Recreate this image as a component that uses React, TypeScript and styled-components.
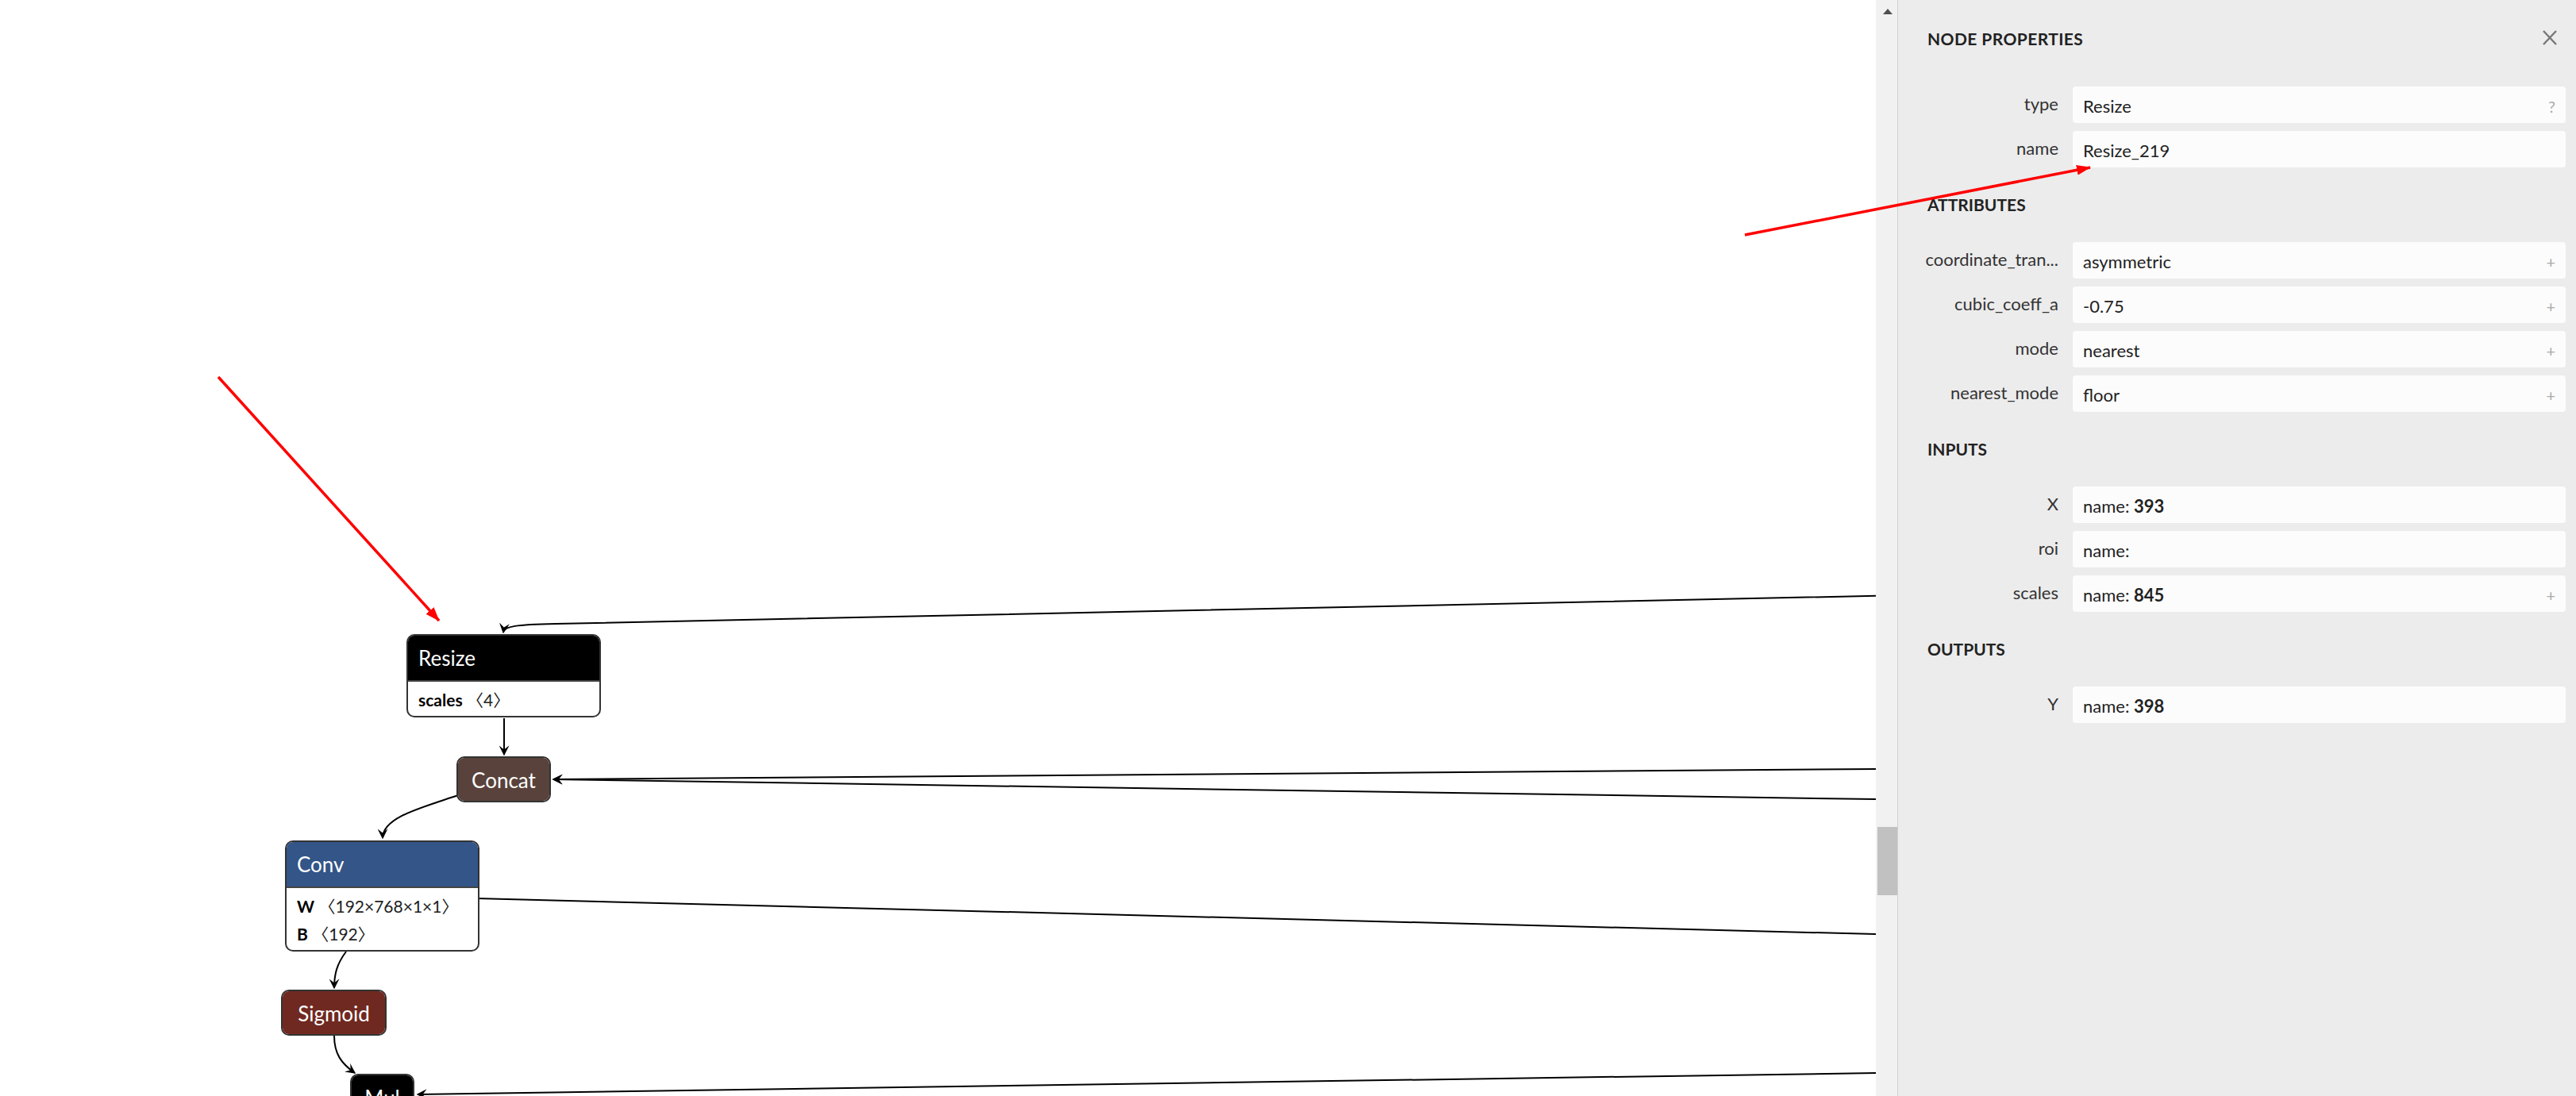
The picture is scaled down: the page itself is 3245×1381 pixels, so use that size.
import React from 'react';
import styled, { createGlobalStyle } from 'styled-components';

interface IAttr {
  name: string;
  value: string;
}

interface IGraphNode {
  title: string;
  color: string;
  x: number;
  y: number;
  w: number;
  attrs?: IAttr[];
}

interface IProp {
  label: string;
  value?: string;
  ref?: string;
  marker?: '+' | '?';
}

const nodes: IGraphNode[] = [
  { title: 'Resize', color: '#000', x: 512, y: 799, w: 245, attrs: [{ name: 'scales', value: '〈4〉' }] },
  { title: 'Concat', color: 'rgb(89, 66, 59)', x: 575, y: 953, w: 119 },
  {
    title: 'Conv',
    color: 'rgb(51, 85, 136)',
    x: 359,
    y: 1059,
    w: 245,
    attrs: [
      { name: 'W', value: '〈192×768×1×1〉' },
      { name: 'B', value: '〈192〉' },
    ],
  },
  { title: 'Sigmoid', color: 'rgb(112, 41, 33)', x: 354, y: 1247, w: 133 },
  { title: 'Mul', color: '#000', x: 441, y: 1353, w: 81 },
];

const edges = [
  'M 2400 750 L 700 786 C 650 787, 635 789, 634 797',
  'M 635 905 L 635 951',
  'M 2400 968.7 L 697 982',
  'M 2400 1007.6 L 697 982',
  'M 577 1002 C 530 1018, 482 1030, 482 1056',
  'M 600 1132 L 2400 1178',
  'M 436 1199 C 424 1215, 421 1228, 421 1245',
  'M 421 1305 C 421 1328, 430 1340, 447 1352',
  'M 2400 1351.5 L 526 1379',
];

const general: IProp[] = [
  { label: 'type', value: 'Resize', marker: '?' },
  { label: 'name', value: 'Resize_219' },
];

const sections: { title: string; rows: IProp[] }[] = [
  {
    title: 'ATTRIBUTES',
    rows: [
      { label: 'coordinate_tran...', value: 'asymmetric', marker: '+' },
      { label: 'cubic_coeff_a', value: '-0.75', marker: '+' },
      { label: 'mode', value: 'nearest', marker: '+' },
      { label: 'nearest_mode', value: 'floor', marker: '+' },
    ],
  },
  {
    title: 'INPUTS',
    rows: [
      { label: 'X', ref: '393' },
      { label: 'roi', ref: '' },
      { label: 'scales', ref: '845', marker: '+' },
    ],
  },
  {
    title: 'OUTPUTS',
    rows: [{ label: 'Y', ref: '398' }],
  },
];

const PropRow = ({ label, value, ref, marker }: IProp) => (
  <Row>
    <Label>
      <span>{label}</span>
    </Label>
    <Value>
      {ref !== undefined ? (
        <span>
          name: <b>{ref}</b>
        </span>
      ) : (
        <span>{value}</span>
      )}
      {marker && <Marker>{marker}</Marker>}
    </Value>
  </Row>
);

const App = () => {
  return (
    <>
      <GlobalStyle />
      <Page>
        <GraphArea>
          <EdgeLayer viewBox="0 0 2400 1381">
            <defs>
              <marker
                id="arrowhead"
                viewBox="0 0 10 10"
                refX="9"
                refY="5"
                markerWidth="13"
                markerHeight="13"
                markerUnits="userSpaceOnUse"
                orient="auto"
              >
                <path d="M 0 0 L 10 5 L 0 10 L 4 5 z" fill="#000" />
              </marker>
            </defs>
            {edges.map((d, i) => (
              <path key={i} d={d} fill="none" stroke="#000" strokeWidth="2" markerEnd="url(#arrowhead)" />
            ))}
          </EdgeLayer>
          {nodes.map((n) => (
            <NodeBox key={n.title} $x={n.x} $y={n.y} $w={n.w}>
              <NodeHeader $color={n.color} $center={!n.attrs}>
                {n.title}
              </NodeHeader>
              {n.attrs && (
                <NodeBody>
                  {n.attrs.map((a) => (
                    <div key={a.name}>
                      <b>{a.name}</b> {a.value}
                    </div>
                  ))}
                </NodeBody>
              )}
            </NodeBox>
          ))}
        </GraphArea>

        <ScrollTrack>
          <ScrollArrow />
          <ScrollThumb />
        </ScrollTrack>

        <Sidebar>
          <SidebarHeader>
            <Title>NODE PROPERTIES</Title>
            <CloseButton aria-label="close">
              <svg width="18" height="19" viewBox="0 0 18 19">
                <path d="M 1 1 L 17 18 M 17 1 L 1 18" stroke="#777" strokeWidth="2.4" fill="none" />
              </svg>
            </CloseButton>
          </SidebarHeader>
          <Rows>
            {general.map((r) => (
              <PropRow key={r.label} {...r} />
            ))}
          </Rows>
          {sections.map((s) => (
            <Section key={s.title}>
              <SectionTitle>{s.title}</SectionTitle>
              <Rows>
                {s.rows.map((r) => (
                  <PropRow key={r.label} {...r} />
                ))}
              </Rows>
            </Section>
          ))}
        </Sidebar>
      </Page>

      <Annotations viewBox="0 0 3245 1381">
        <defs>
          <marker
            id="redhead"
            viewBox="0 0 18 13"
            refX="17"
            refY="6.5"
            markerWidth="18"
            markerHeight="13"
            markerUnits="userSpaceOnUse"
            orient="auto"
          >
            <path d="M 0 0 L 18 6.5 L 0 13 z" fill="#f00" />
          </marker>
        </defs>
        <path d="M 275 475 L 553 782" stroke="#f00" strokeWidth="3.5" markerEnd="url(#redhead)" />
        <path d="M 2198 296 L 2633 211" stroke="#f00" strokeWidth="3.5" markerEnd="url(#redhead)" />
      </Annotations>
    </>
  );
};

export default App;

const GlobalStyle = createGlobalStyle`
  html, body {
    margin: 0;
    padding: 0;
  }

  body {
    font-family: Lato, 'Noto Sans', sans-serif;
    overflow: hidden;
  }
`;

const Page = styled.div`
  display: flex;
  width: 100vw;
  height: 100vh;
  overflow: hidden;
`;

const GraphArea = styled.div`
  position: relative;
  flex: 1;
  overflow: hidden;
  background: #fff;
`;

const EdgeLayer = styled.svg`
  position: absolute;
  left: 0;
  top: 0;
  width: 2400px;
  height: 1381px;
`;

const NodeBox = styled.div<{ $x: number; $y: number; $w: number }>`
  position: absolute;
  left: ${(p) => p.$x}px;
  top: ${(p) => p.$y}px;
  width: ${(p) => p.$w}px;
  box-sizing: border-box;
  border: 2px solid #333;
  border-radius: 10px;
  overflow: hidden;
  background: #fff;
  font-family: Lato, 'Noto Sans CJK SC', sans-serif;
`;

const NodeHeader = styled.div<{ $color: string; $center: boolean }>`
  background: ${(p) => p.$color};
  color: #fff;
  font-size: 26px;
  box-sizing: border-box;
  height: ${(p) => (p.$center ? 54 : 56)}px;
  line-height: ${(p) => (p.$center ? 52 : 56)}px;
  padding: ${(p) => (p.$center ? '2px 0 0' : '0 13px')};
  text-align: ${(p) => (p.$center ? 'center' : 'left')};
  white-space: nowrap;
`;

const NodeBody = styled.div`
  border-top: 2px solid #444;
  padding: 5px 13px 3px;
  font-size: 21px;
  line-height: 35px;
  color: #222;
  white-space: nowrap;

  b {
    color: #000;
  }
`;

const ScrollTrack = styled.div`
  width: 27px;
  flex: none;
  background: #f1f1f1;
  display: flex;
  flex-direction: column;
`;

const ScrollArrow = styled.div`
  width: 0;
  height: 0;
  margin: 11px 0 0 9px;
  border-left: 6px solid transparent;
  border-right: 6px solid transparent;
  border-bottom: 7px solid #505050;
`;

const ScrollThumb = styled.div`
  margin: 1024px 0 0 2px;
  width: 25px;
  height: 86px;
  background: #c1c1c1;
`;

const Sidebar = styled.aside`
  width: 855px;
  flex: none;
  box-sizing: border-box;
  border-left: 1px solid #d0d0d0;
  background: #ececec;
  padding: 34px 13px 0 37px;
  font-family: Lato, 'Noto Sans', sans-serif;
  color: #222;
`;

const SidebarHeader = styled.div`
  display: flex;
  align-items: center;
  justify-content: space-between;
  height: 30px;
  margin-bottom: 45px;
`;

const Title = styled.h1`
  margin: 0;
  font-size: 21px;
  line-height: 30px;
  font-weight: 700;
  letter-spacing: 0.4px;
  color: #222;
`;

const CloseButton = styled.button`
  display: flex;
  width: 18px;
  height: 19px;
  margin: 0 11px 3px 0;
  padding: 0;
  border: 0;
  background: none;
  cursor: pointer;
`;

const Section = styled.section`
  margin-top: 32px;
`;

const SectionTitle = styled.h2`
  margin: 0 0 32px;
  font-size: 21px;
  line-height: 30px;
  font-weight: 700;
  color: #222;
`;

const Rows = styled.div`
  display: flex;
  flex-direction: column;
  gap: 10px;
`;

const Row = styled.div`
  display: grid;
  grid-template-columns: 165px 1fr;
  column-gap: 18px;
  height: 46px;
`;

const Label = styled.div`
  display: flex;
  justify-content: flex-end;
  font-size: 22px;
  line-height: 43px;
  color: #333;
  white-space: nowrap;
`;

const Value = styled.div`
  display: flex;
  justify-content: space-between;
  box-sizing: border-box;
  height: 46px;
  padding: 4px 13px 0;
  border-radius: 4px;
  background: #fcfcfc;
  font-size: 22px;
  line-height: 42px;
  color: #222;
  white-space: nowrap;
`;

const Marker = styled.span`
  color: #aaa;
  font-size: 20px;
`;

const Annotations = styled.svg`
  position: fixed;
  left: 0;
  top: 0;
  width: 100vw;
  height: 100vh;
  pointer-events: none;
  z-index: 10;
`;
